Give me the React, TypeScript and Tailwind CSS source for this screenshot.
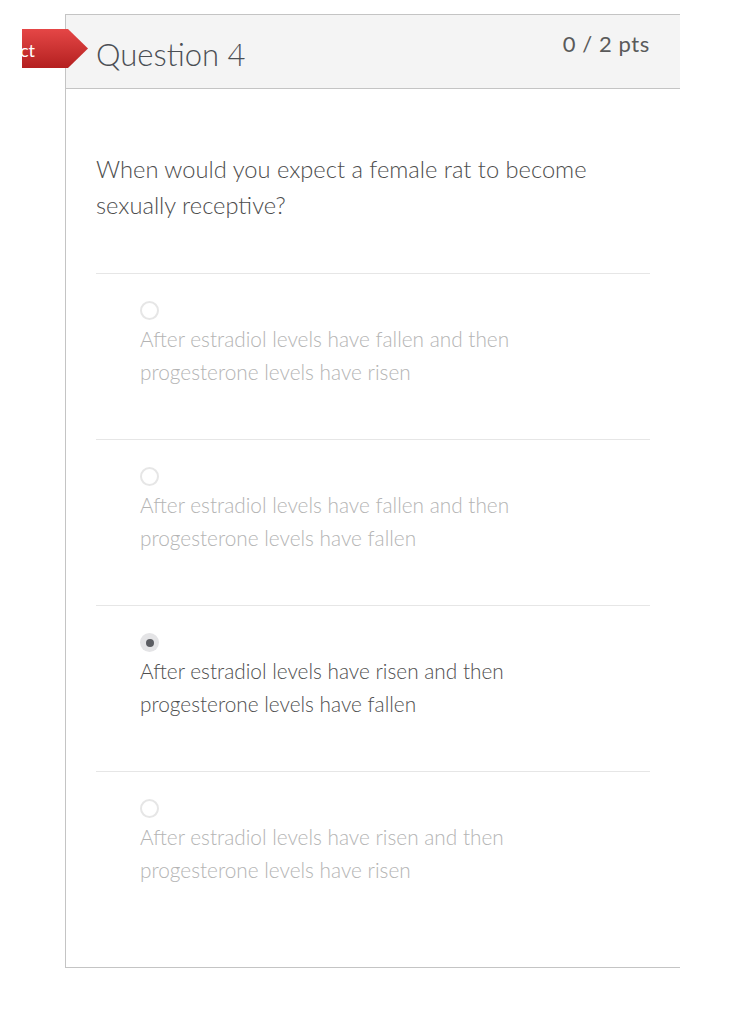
import React from "react";

const answers = [
  { text: "After estradiol levels have fallen and then progesterone levels have risen", selected: false },
  { text: "After estradiol levels have fallen and then progesterone levels have fallen", selected: false },
  { text: "After estradiol levels have risen and then progesterone levels have fallen", selected: true },
  { text: "After estradiol levels have risen and then progesterone levels have risen", selected: false },
];

const Radio = ({ checked }: { checked: boolean }) =>
  checked ? (
    <div className="w-[19px] h-[19px] rounded-full bg-[#e4e4e6] flex items-center justify-center">
      <div className="w-[8px] h-[8px] rounded-full bg-[#5b5d62]" />
    </div>
  ) : (
    <div className="w-[19px] h-[19px] rounded-full border-2 border-[#e6e6e6] bg-white" />
  );

const App: React.FC = () => {
  return (
    <div className="min-h-[1017px] bg-white pt-[14px] pl-[65px] font-['Lato','Liberation_Sans',sans-serif] overflow-hidden">
      <div className="relative w-[615px] h-[954px] border-l border-t border-b border-[#c4c4c4]">
        {/* result tag, cut off at its left side */}
        <div className="absolute left-[-44px] top-[14px] h-[39px] flex">
          <div className="h-full w-[46px] overflow-hidden bg-gradient-to-b from-[#e54646] to-[#b41f1f] flex justify-end pr-[33px]">
            <span className="text-white text-[18px] leading-[42px] whitespace-nowrap">Incorrect</span>
          </div>
          <div className="h-full w-[20px] bg-gradient-to-b from-[#e54646] to-[#b41f1f] [clip-path:polygon(0_0,100%_50%,0_100%)]" />
        </div>

        {/* header */}
        <div className="h-[74px] bg-[#f4f4f4] border-b border-[#c4c4c4] flex justify-between pl-[30px] pr-[30px]">
          <div className="pt-[20px] text-[31px] leading-[38px] font-light text-[#4b4f54]">Question 4</div>
          <div className="pt-[16px] text-[22px] leading-[26px] tracking-[0.6px] text-[#5a5a5a]">0 / 2 pts</div>
        </div>

        {/* body */}
        <div className="px-[30px] pt-[62px]">
          <p className="w-[554px] text-[23.7px] leading-[36px] font-light text-[#4d4d4d]">
            When would you expect a female rat to become sexually receptive?
          </p>
          <div className="mt-[50px] w-[554px]">
            {answers.map((a, i) => (
              <div key={i} className="border-t border-[#e6e6e6] h-[166px] pt-[27px] pl-[44px]">
                <Radio checked={a.selected} />
                <p
                  className={
                    "mt-[2px] w-[430px] text-[20.8px] leading-[33px] font-light " +
                    (a.selected ? "text-[#4f4f4f]" : "text-[#b4b4b4]")
                  }
                >
                  {a.text}
                </p>
              </div>
            ))}
          </div>
        </div>
      </div>
    </div>
  );
};

export default App;
